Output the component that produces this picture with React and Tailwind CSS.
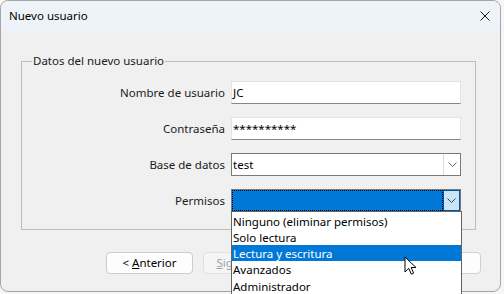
const font = { fontFamily: '"Noto Sans", "Liberation Sans", sans-serif' };

const Chevron = ({ color = "#606060" }) => (
  <svg width="9" height="5" viewBox="0 0 9 5" fill="none">
    <path d="M0.5 0.5 L4.5 4.5 L8.5 0.5" stroke={color} strokeWidth="1" />
  </svg>
);

const Label = ({ children }) => (
  <div className="h-[23px] flex items-center justify-end text-[11.5px] text-[#1a1a1a]">{children}</div>
);

const TextBox = ({ value }) => (
  <div className="h-[23px] bg-white border border-[#e3e3e3] border-b-[#868686] flex items-center pl-[1px] text-[11.5px] text-black">
    {value}
  </div>
);

const options = [
  { t: "Ninguno (eliminar permisos)", h: "h-[16px]" },
  { t: "Solo lectura", h: "h-[16px]" },
  { t: "Lectura y escritura", h: "h-[16px]" },
  { t: "Avanzados", h: "h-[17px]" },
  { t: "Administrador", h: "h-[17px]" },
];

export default function App() {
  return (
    <div className="w-[504px] h-[294px] bg-[#f6f6f6] relative overflow-hidden" style={font}>
      <div className="w-[501px] h-[292px] rounded-[8px] border border-[#a5a5a5] bg-[#f0f0f0] flex flex-col">
        <div className="h-[30px] bg-[#eef3fa] rounded-t-[8px] flex items-center justify-between pl-[8px] pr-[10px]">
          <span className="text-[11.5px] text-black">Nuevo usuario</span>
          <svg width="10" height="10" viewBox="0 0 10 10">
            <path d="M0.5 0.5 L9.5 9.5 M9.5 0.5 L0.5 9.5" stroke="#1a1a1a" strokeWidth="1" />
          </svg>
        </div>

        <div className="pl-[20px] pt-[30px] flex flex-col">
          <div className="relative w-[455px] h-[169px] border border-[#bdbdbd] pt-[19px]">
            <span className="absolute left-[10px] top-[-10px] px-[1px] bg-[#f0f0f0] text-[11.5px] text-[#1a1a1a]">
              Datos del nuevo usuario
            </span>
            <div className="grid grid-cols-[203px_230px] gap-x-[6px] gap-y-[13px]">
              <Label>Nombre de usuario</Label>
              <TextBox value="JC" />
              <Label>Contraseña</Label>
              <TextBox value="**********" />
              <Label>Base de datos</Label>
              <div className="h-[23px] bg-white border border-[#7a7a7a] flex">
                <div className="flex-1 flex items-center pl-[1px] text-[11.5px] text-black">test</div>
                <div className="w-[17px] border-l border-[#dadada] flex items-center justify-center">
                  <Chevron />
                </div>
              </div>
              <Label>Permisos</Label>
              <div className="relative h-[23px]">
                <div className="h-[23px] bg-white border border-[#7a7a7a] flex">
                  <div className="flex-1 bg-[#0078d7] border border-dotted border-black"></div>
                  <div className="w-[17px] bg-[#cce4f7] border border-[#005499] flex items-center justify-center">
                    <Chevron color="#404040" />
                  </div>
                </div>
                <div className="absolute left-0 top-[22px] w-[231px] bg-white border border-[#646464] pt-[1px] z-10">
                  {options.map((o, i) => (
                    <div
                      key={o.t}
                      className={
                        o.h +
                        " leading-[15px] flex items-center pl-[1px] text-[11.5px] whitespace-nowrap " +
                        (i === 2 ? "bg-[#0078d7] text-white" : "text-black")
                      }
                    >
                      {o.t}
                    </div>
                  ))}
                </div>
              </div>
            </div>
          </div>

          <div className="flex mt-[22px] ml-[85px]">
            <div className="w-[87px] h-[22px] rounded-[4px] border border-[#cccccc] bg-[#fdfdfd] flex items-center justify-center text-[11.5px] text-black">
              &lt; <span className="underline ml-[3px]">A</span>nterior
            </div>
            <div className="ml-[10px] w-[87px] h-[22px] rounded-[4px] border border-[#e0e0e0] bg-[#f5f5f5] flex items-center justify-center text-[11.5px] text-[#a0a0a0]">
              <span className="underline">S</span>iguiente &gt;
            </div>
            <div className="ml-[104px] w-[87px] h-[22px] rounded-[4px] border border-[#d0d0d0] bg-[#fdfdfd] flex items-center justify-center text-[11.5px] text-black">
              Cancelar
            </div>
          </div>
        </div>
      </div>

      <svg className="absolute left-[404px] top-[256px] z-20" width="14" height="20" viewBox="0 0 14 20">
        <path d="M1 1 L1 16 L4.8 12.4 L7.3 18.2 L9.6 17.2 L7.2 11.5 L12 11.5 Z" fill="white" stroke="black" strokeWidth="1" strokeLinejoin="round" />
      </svg>
    </div>
  );
}
